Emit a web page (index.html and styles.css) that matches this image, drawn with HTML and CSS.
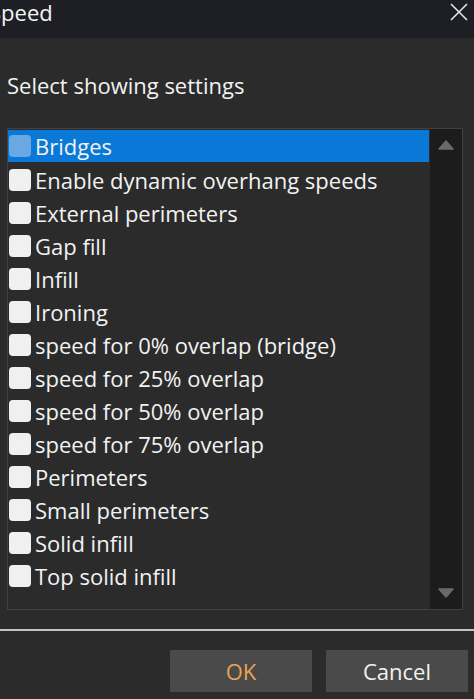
FILE: index.html
```html
<!DOCTYPE html>
<html>
<head>
<meta charset="utf-8">
<link rel="stylesheet" href="styles.css">
</head>
<body>
<div class="dialog">
  <div class="titlebar">
    <span class="title">Speed</span>
    <svg class="close" width="18" height="18" viewBox="0 0 18 18"><path d="M1 1 L17 17 M17 1 L1 17" stroke="#e6e6e6" stroke-width="1.6" fill="none"/></svg>
  </div>
  <div class="content">
    <div class="prompt">Select showing settings</div>
    <div class="listbox">
      <div class="items">
        <div class="item selected"><span class="check"></span><span class="label">Bridges</span></div>
        <div class="item"><span class="check"></span><span class="label">Enable dynamic overhang speeds</span></div>
        <div class="item"><span class="check"></span><span class="label">External perimeters</span></div>
        <div class="item"><span class="check"></span><span class="label">Gap fill</span></div>
        <div class="item"><span class="check"></span><span class="label">Infill</span></div>
        <div class="item"><span class="check"></span><span class="label">Ironing</span></div>
        <div class="item"><span class="check"></span><span class="label">speed for 0% overlap (bridge)</span></div>
        <div class="item"><span class="check"></span><span class="label">speed for 25% overlap</span></div>
        <div class="item"><span class="check"></span><span class="label">speed for 50% overlap</span></div>
        <div class="item"><span class="check"></span><span class="label">speed for 75% overlap</span></div>
        <div class="item"><span class="check"></span><span class="label">Perimeters</span></div>
        <div class="item"><span class="check"></span><span class="label">Small perimeters</span></div>
        <div class="item"><span class="check"></span><span class="label">Solid infill</span></div>
        <div class="item"><span class="check"></span><span class="label">Top solid infill</span></div>
      </div>
      <div class="scrollbar">
        <svg width="16" height="10" viewBox="0 0 16 10"><path d="M8 1 L15 9 L1 9 Z" fill="#6a6a6a" stroke="#6a6a6a" stroke-width="1.5" stroke-linejoin="round"/></svg>
        <svg width="16" height="10" viewBox="0 0 16 10"><path d="M1 1 L15 1 L8 9 Z" fill="#6a6a6a" stroke="#6a6a6a" stroke-width="1.5" stroke-linejoin="round"/></svg>
      </div>
    </div>
  </div>
  <div class="separator"></div>
  <div class="buttons">
    <button class="btn ok">OK</button>
    <button class="btn">Cancel</button>
  </div>
</div>
</body>
</html>
```
FILE: styles.css
```css
html, body {
  margin: 0;
  padding: 0;
  background: #2b2b2b;
}
body {
  width: 474px;
  height: 699px;
  overflow: hidden;
  font-family: "Open Sans", "Noto Sans", sans-serif;
  color: #f2f2f2;
}
.dialog {
  display: flex;
  flex-direction: column;
  height: 699px;
}
.titlebar {
  height: 38px;
  background: #1e1f25;
  display: flex;
  align-items: center;
  justify-content: space-between;
  padding: 0 6px 0 0;
  overflow: hidden;
}
.title {
  font-size: 22px;
  line-height: 26px;
  margin-top: -14px;
  margin-left: -11px;
  color: #f4f4f4;
}
.close {
  margin-top: -14px;
}
.content {
  padding: 0 11px 0 7px;
}
.prompt {
  font-size: 22px;
  height: 27px;
  line-height: 27px;
  margin-top: 34px;
  margin-left: 0;
  margin-bottom: 29px;
}
.listbox {
  height: 480px;
  border: 1px solid #404040;
  display: flex;
  background: #2b2b2b;
}
.items {
  flex: 1;
  padding-top: 1px;
}
.item {
  height: 33px;
  display: flex;
  align-items: center;
  font-size: 22px;
  line-height: 28px;
  margin-right: 1px;
}
.item.selected {
  background: #0a78d6;
  height: 32px;
  margin-bottom: 1px;
}
.check {
  width: 22px;
  height: 22px;
  border-radius: 4px;
  background: #f0f0f0;
  margin-left: 1px;
  margin-right: 4px;
  flex: none;
}
.selected .check {
  background: #6aa8e4;
}
.scrollbar {
  width: 32px;
  background: #1c1c1c;
  display: flex;
  flex-direction: column;
  justify-content: space-between;
  align-items: center;
  padding: 11px 0 11px;
  box-sizing: border-box;
}
.separator {
  margin-top: 19px;
  height: 2px;
  background: #c4c4c4;
}
.buttons {
  display: flex;
  justify-content: flex-end;
  gap: 14px;
  padding: 19px 6px 0 0;
}
.btn {
  width: 142px;
  height: 42px;
  background: #4a4a4a;
  border: none;
  font-family: "Open Sans", "Noto Sans", sans-serif;
  font-size: 22px;
  color: #f2f2f2;
  padding: 0;
}
.btn.ok {
  color: #e8a451;
}
```
